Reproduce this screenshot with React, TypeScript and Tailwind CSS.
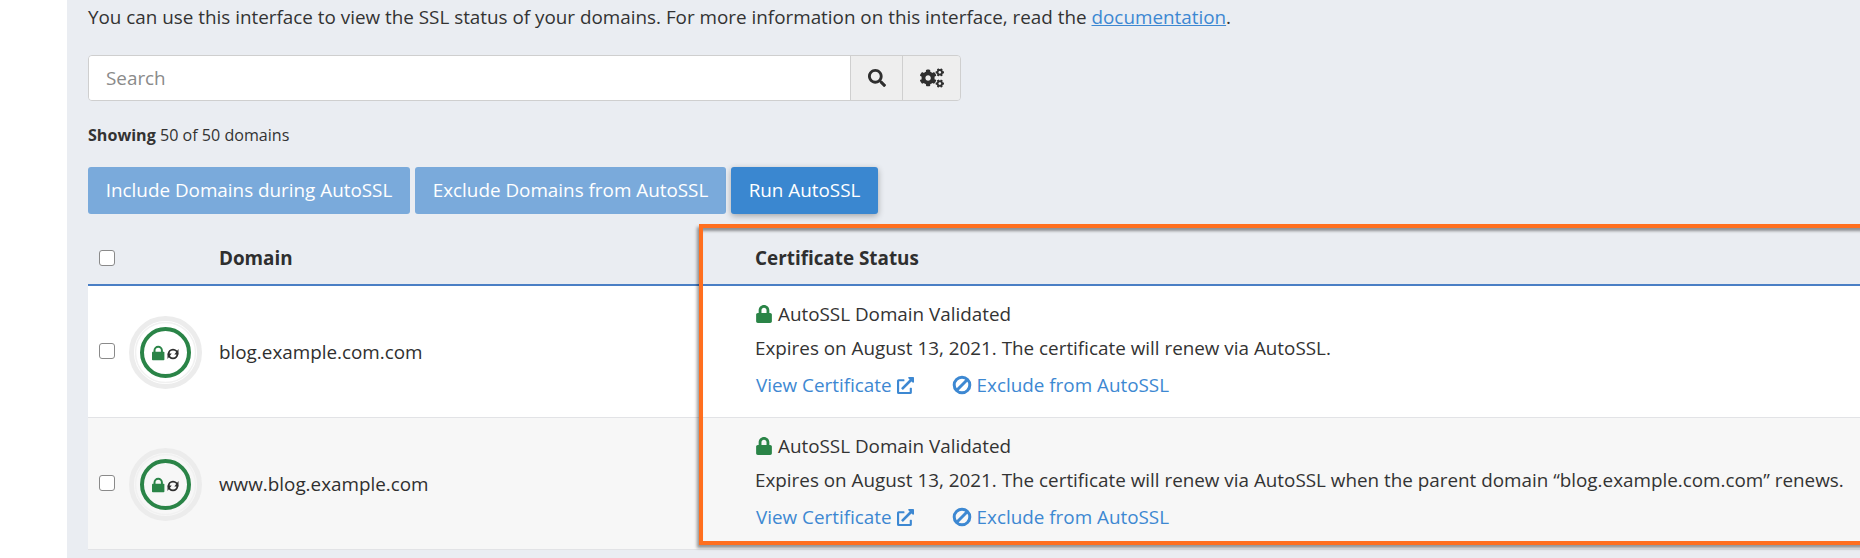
import { FaCogs, FaExternalLinkAlt, FaLock, FaSearch } from "react-icons/fa";

// round status badge in front of the domain name
function StatusBadge() {
  return (
    <svg width="74" height="74" viewBox="0 0 74 74" fill="none" className="shrink-0">
      <circle cx="36.5" cy="36.5" r="34" stroke="#ececec" strokeWidth="5" />
      <circle cx="36.5" cy="36.5" r="30" stroke="#f1f1f1" strokeWidth="1.5" />
      <circle cx="36.5" cy="36.5" r="23.5" stroke="#2a8447" strokeWidth="4" />
      <path d="M25.5 36.5v-2a3.7 3.7 0 0 1 7.4 0v2" stroke="#2a8447" strokeWidth="2" />
      <path d="M23 36.5c0-.5.3-.8.8-.8h10.800c.5 0 .8.3.8.8v7c0 .5-.3.8-.8.8H23.800c-.5 0-.8-.3-.8-.8z" fill="#2a8447" />
      <circle cx="44" cy="38" r="4.4" stroke="#2f2f2f" strokeWidth="1.9" />
      <path d="M49.500 33v5.400h-4.200zM38.500 43v-5.400h4.200z" fill="#2f2f2f" />
    </svg>
  );
}

// heavier than the icon-pack ban, slash runs bottom-left to top-right
const BanIcon = () => (
  <svg width="20" height="20" viewBox="0 0 20 20" fill="none" stroke="currentColor" strokeWidth="3" className="ml-[38px]">
    <circle cx="10" cy="10" r="7.800" />
    <path d="M4.800 15.200 15.200 4.800" />
  </svg>
);

const Checkbox = () => (
  <input
    type="checkbox"
    className="w-4 h-4 appearance-none bg-white border border-[#8a8a8a] rounded-[3px] shrink-0"
  />
);

function DomainRow({
  domain,
  expires,
  striped,
}: {
  domain: string;
  expires: string;
  striped?: boolean;
}) {
  return (
    <div
      className={`flex items-center h-[132px] pt-[2px] border-b border-[#e2e3e6] ${
        striped ? "bg-[#f7f7f7]" : "bg-white"
      }`}
    >
      <div className="w-[41px] pl-[11px] mb-[3px] flex">
        <Checkbox />
      </div>
      <StatusBadge />
      <div className="w-[552px] pl-[16px] text-[#2f2f2f]">{domain}</div>
      <div className="flex flex-col mb-[3px]">
        <div className="h-[34px] flex items-center gap-[5px]">
          <FaLock className="text-[#2a8447] w-[18px] h-[18px]" />
          <span>AutoSSL Domain Validated</span>
        </div>
        <div className="h-[34px] flex items-center">{expires}</div>
        <div className="h-[40px] flex items-center text-[#3d88d2]">
          <span className="ml-[1px]">View Certificate</span>
          <FaExternalLinkAlt className="w-[17px] h-[17px] ml-[5px]" />
          <BanIcon />
          <span className="ml-[5px]">Exclude from AutoSSL</span>
        </div>
      </div>
    </div>
  );
}

export default function App() {
  return (
    <div className="relative flex h-[558px] overflow-hidden bg-white font-['Open_Sans',sans-serif] text-[18.85px] text-[#333]">
      <div className="w-[67px] shrink-0 bg-white" />
      <div className="flex-1 bg-[#eaedf2] pl-[21px]">
        <p className="h-[34px] leading-[34px] whitespace-nowrap">
          You can use this interface to view the SSL status of your domains. For more information on this interface,
          read the <a className="text-[#3d88d2] underline">documentation</a>.
        </p>

        {/* search */}
        <div className="mt-[21px] flex w-[873px] h-[46px] border border-[#cfcfcf] rounded-[4px] overflow-hidden">
          <div className="flex-1 bg-white pl-[17px] pt-[1px] flex items-center text-[#8a8a8a]">Search</div>
          <div className="w-[52px] bg-[#eeeeee] border-l border-[#cfcfcf] flex items-center justify-center">
            <FaSearch className="w-[18px] h-[18px] text-[#2f2f2f]" />
          </div>
          <div className="w-[58px] bg-[#eeeeee] border-l border-[#cfcfcf] flex items-center justify-center">
            <FaCogs className="w-[24px] h-[20px] text-[#2f2f2f]" />
          </div>
        </div>

        <div className="mt-[22px] h-[24px] leading-[24px] text-[16.1px]">
          <b className="font-bold">Showing</b> 50 of 50 domains
        </div>

        {/* actions */}
        <div className="mt-[20px] flex gap-[5px] text-white">
          <button className="h-[47px] w-[322px] bg-[#7aaadb] rounded-[3px]">Include Domains during AutoSSL</button>
          <button className="h-[47px] w-[311px] bg-[#7aaadb] rounded-[3px]">Exclude Domains from AutoSSL</button>
          <button className="h-[47px] w-[147px] bg-[#3a87d0] rounded-[3px] shadow-[0_2px_6px_rgba(0,0,0,0.3)]">
            Run AutoSSL
          </button>
        </div>

        {/* table */}
        <div className="mt-[18px]">
          <div className="flex items-center h-[54px] border-b-2 border-[#4a7fc5] font-bold text-[#2f2f2f]">
            <div className="w-[131px] pl-[11px] flex">
              <Checkbox />
            </div>
            <div className="w-[536px]">Domain</div>
            <div>Certificate Status</div>
          </div>
          <DomainRow
            domain="blog.example.com.com"
            expires="Expires on August 13, 2021. The certificate will renew via AutoSSL."
          />
          <DomainRow
            striped
            domain="www.blog.example.com"
            expires="Expires on August 13, 2021. The certificate will renew via AutoSSL when the parent domain “blog.example.com.com” renews."
          />
        </div>
      </div>

      {/* orange annotation box drawn over the screenshot */}
      <div className="absolute left-[699px] top-[224px] w-[1200px] h-[321px] border-4 border-[#ff6f1f] shadow-[-2px_3px_3px_rgba(0,0,0,0.4),inset_-2px_3px_3px_rgba(0,0,0,0.4)] pointer-events-none" />
    </div>
  );
}
